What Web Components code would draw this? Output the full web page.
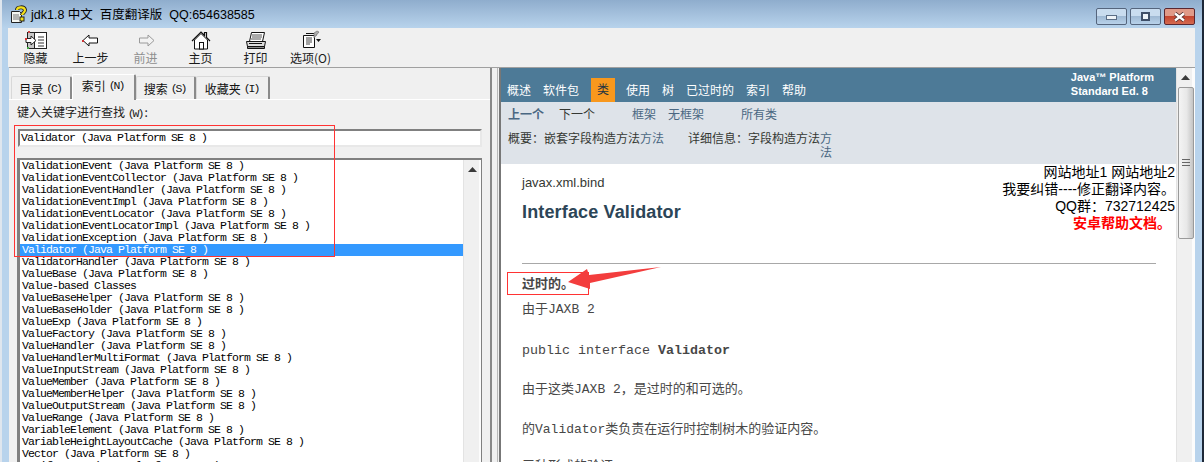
<!DOCTYPE html>
<html lang="zh">
<head>
<meta charset="utf-8">
<title>jdk1.8 中文 百度翻译版</title>
<style>
html, body { margin: 0; height: 100%; overflow: hidden; }
body { font: 12px "Noto Sans CJK SC", sans-serif; }
</style>
</head>
<body>
<help-window>
  <title-bar slot="title">jdk1.8 中文&nbsp; 百度翻译版&nbsp; QQ:654638585</title-bar>
  <tool-bar slot="tools">
    <tool-button label="隐藏" icon="hide"></tool-button>
    <tool-button label="上一步" icon="back"></tool-button>
    <tool-button label="前进" icon="forward" disabled></tool-button>
    <tool-button label="主页" icon="home"></tool-button>
    <tool-button label="打印" icon="print"></tool-button>
    <tool-button label="选项(O)" icon="options"></tool-button>
  </tool-bar>
  <index-pane slot="left"></index-pane>
  <doc-pane slot="right"></doc-pane>
</help-window>

<script>
const ICONS = {
  hide: `<svg width="22" height="20" viewBox="0 0 22 20"><rect x="2.500" y="2.500" width="19" height="16" fill="#fff" stroke="#222"/><rect x="2.500" y="2.500" width="7" height="16" fill="#c8c8c8" stroke="#222"/><path d="M13 7h6M13 10h6M13 13h6M13 16h6" stroke="#333"/><path d="M1 8.500h5V6l5 4.500L6 15v-2.500H1z" fill="#fff" stroke="#222"/><rect x="0" y="8" width="2" height="2" fill="#d33"/><rect x="3" y="1" width="2" height="2" fill="#c44"/><rect x="2" y="17" width="2" height="2" fill="#4a4"/></svg>`,
  back: `<svg width="22" height="20" viewBox="0 0 22 20"><path d="M3 10.500 9 5v3h8.500v5H9v3z" fill="#fff" stroke="#111"/><rect x="2" y="10" width="2" height="2" fill="#c33"/></svg>`,
  forward: `<svg width="22" height="20" viewBox="0 0 22 20"><path d="M19 10.500 13 5v3H4.500v5H13v3z" fill="#f2f2f2" stroke="#9a9a9a"/></svg>`,
  home: `<svg width="22" height="20" viewBox="0 0 22 20"><path d="M2 11 11 2l3.500 3.500V2.500h2v5L20 11" fill="none" stroke="#111" stroke-width="1.200"/><path d="M4.500 10v9h13v-9L11 3.500z" fill="#fff" stroke="#111"/><rect x="9.500" y="12.500" width="4" height="6.500" fill="#fff" stroke="#111"/></svg>`,
  print: `<svg width="22" height="20" viewBox="0 0 22 20"><path d="M6.500 2.500h13l-2 9h-13z" fill="#fff" stroke="#111"/><path d="M7 5h10M7 7h10M6 9h10" stroke="#555"/><path d="M1.500 11.500h19l-1 5h-17z" fill="#ddd" stroke="#111"/><path d="M2.500 16.500h17v2h-17z" fill="#888" stroke="#111"/><path d="M4 13.500h13" stroke="#111"/></svg>`,
  options: `<svg width="22" height="20" viewBox="0 0 22 20"><path d="M3.500 5.500h11v12h-11z" fill="#fff" stroke="#111"/><path d="M6 3.500h10v2" fill="none" stroke="#111"/><path d="M6 8h6M6 10h6M6 12h6M6 14h4" stroke="#444"/><path d="M14 3l3-2 2 1-5 6z" fill="#aaa" stroke="#666" stroke-width=".6"/><path d="M16 9h5l-2.500 3z" fill="#111"/></svg>`
}

class HelpWindow extends HTMLElement {
  constructor() {
    super()
    this.attachShadow({ mode: 'open' }).innerHTML = `
<style>
:host { display: flex; flex-direction: column; height: 462px; width: 1204px; box-sizing: border-box;
  padding: 0 2px 0 2px; position: relative; overflow: hidden;
  background: linear-gradient(#8fadcd 0, #b8d3ec 28px, #b8d3ec 100%); }
.frame { flex: 1; display: flex; flex-direction: column; min-height: 0; }
.client { flex: 1; display: flex; flex-direction: column; min-height: 0; margin: 0 7px; background: #f0f0f0; }
.panes { flex: 1; display: flex; min-height: 0; border-top: 1px solid #a0a0a0; }
.split { width: 11px; box-sizing: border-box; border-left: 2px solid #888; border-right: 2px solid #777;
  background: linear-gradient(90deg, #f0f0f0 0 5px, #b8b8b8 5px 6px, #f0f0f0 6px); }
svg.mark { position: absolute; left: 0; top: 0; pointer-events: none; }
::slotted([slot=left]) { width: 481px; }
::slotted([slot=right]) { flex: 1; min-width: 0; }
.edge { position: absolute; top: 0; bottom: 0; width: 2px; }
</style>
<div class="edge" style="left:0;background:#dfe6ee"></div>
<div class="edge" style="right:0;background:#1d2838"></div>
<div class="frame">
  <slot name="title"></slot>
  <div class="client">
    <slot name="tools"></slot>
    <div class="panes">
      <slot name="left"></slot>
      <div class="split"></div>
      <slot name="right"></slot>
    </div>
  </div>
</div>
<svg class="mark" width="1204" height="462">
  <rect x="14.500" y="125.500" width="320" height="131" fill="none" stroke="#f33"/>
  <rect x="507.500" y="272.500" width="81" height="22" fill="none" stroke="#f33"/>
  <path d="M568 282 587 269 589 275 661 267 590 283 590 289z" fill="#f33d3d"/>
</svg>`
  }
}

class TitleBar extends HTMLElement {
  constructor() {
    super()
    this.attachShadow({ mode: 'open' }).innerHTML = `
<style>
:host { display: flex; align-items: center; height: 28px; padding: 0 7px 0 7px; box-sizing: border-box;
  font: 12px/1 "Liberation Sans", "Noto Sans CJK SC", sans-serif; color: #000; }
svg { margin-right: 2px; margin-top: 2px; }
.text { flex: 1; font-size: 12.500px; padding-top: 3px; }
.btns { display: flex; gap: 3px; margin-top: 5px; }
.btn { width: 31px; height: 17px; box-sizing: border-box; border: 1px solid #55657d; border-radius: 2px;
  display: flex; align-items: center; justify-content: center;
  background: linear-gradient(#c9dcef 0 45%, #9fb9d4 50%, #b9d2ea 100%); }
.close { border-color: #5a2730; background: linear-gradient(#e09a88 0 45%, #c4452f 50%, #d56a50 100%); }
</style>
<svg width="20" height="20" viewBox="0 0 20 20">
  <path d="M2.500 6.500h8l2 2v9h-10z" fill="#f6f6f0" stroke="#222"/>
  <path d="M4 10h6M4 12h6M4 14h6" stroke="#777"/>
  <path d="M8 5c0-3 7-4 8 0 0 3-3 3-3 5" fill="none" stroke="#222" stroke-width="4"/>
  <path d="M8 5c0-3 7-4 8 0 0 3-3 3-3 5" fill="none" stroke="#f4e01a" stroke-width="2.200"/>
  <rect x="11" y="12" width="4" height="4" fill="#f4e01a" stroke="#222"/>
</svg>
<div class="text"><slot></slot></div>
<div class="btns">
  <div class="btn"><svg width="11" height="5" style="margin:2px 0 0"><rect x=".5" y=".5" width="10" height="4" fill="#eef3f8" stroke="#5b6d86"/></svg></div>
  <div class="btn"><svg width="11" height="9" style="margin:0"><rect x="2" y="1" width="7" height="7" fill="#eef3f8" stroke="#3f4f68" stroke-width="2"/></svg></div>
  <div class="btn close"><svg width="15" height="10" style="margin:0"><path d="M3 1.500 12 8.500M12 1.500 3 8.500" stroke="#4a2a2a" stroke-width="4"/><path d="M3 1.500 12 8.500M12 1.500 3 8.500" stroke="#fff" stroke-width="2.400"/></svg></div>
</div>`
  }
}

class ToolBar extends HTMLElement {
  constructor() {
    super()
    this.attachShadow({ mode: 'open' }).innerHTML = `
<style>
:host { display: flex; height: 39px; margin-left: -1px; padding-top: 2px; box-sizing: border-box; background: #f0f0f0; }
</style><slot></slot>`
  }
}

class ToolButton extends HTMLElement {
  connectedCallback() {
    const root = this.attachShadow({ mode: 'open' })
    root.innerHTML = `
<style>
:host { display: flex; flex-direction: column; align-items: center; width: 55px; }
svg { display: block; }
.label { font: 12px/14px "Noto Sans CJK SC", sans-serif; color: #1a1a1a; margin-top: 1px; white-space: nowrap; }
:host([disabled]) .label { color: #8f8f8f; }
</style>${ICONS[this.getAttribute('icon')]}<div class="label">${this.getAttribute('label')}</div>`
  }
}

class TabItem extends HTMLElement {
  connectedCallback() {
    const root = this.attachShadow({ mode: 'open' })
    root.innerHTML = `
<style>
:host { display: flex; align-items: center; justify-content: center; box-sizing: border-box; height: 23px; padding-top: 1px;
  align-self: flex-end; background: #f0f0f0; border: 1px solid #d8d8d8; border-bottom: 0; border-right: 2px solid #8a8a8a;
  border-radius: 2px 2px 0 0; font: 12px/1 "Noto Sans CJK SC", sans-serif; color: #111; white-space: nowrap; }
:host([active]) { height: 26px; border-color: #fff; border-right-color: #8a8a8a; padding: 0 0 3px; position: relative; top: 1px; background: #f0f0f0; }
.k { font: 11.500px/1 "Liberation Mono", monospace; letter-spacing: -2px; margin-left: 3px; padding-right: 2px; }
</style>${this.getAttribute('label')}<span class="k">${this.getAttribute('key')}</span>`
  }
}

const ROWS = ['ValidationEvent', 'ValidationEventCollector', 'ValidationEventHandler', 'ValidationEventImpl',
  'ValidationEventLocator', 'ValidationEventLocatorImpl', 'ValidationException', 'Validator', 'ValidatorHandler',
  'ValueBase', '*Value-based Classes', 'ValueBaseHelper', 'ValueBaseHolder', 'ValueExp', 'ValueFactory', 'ValueHandler',
  'ValueHandlerMultiFormat', 'ValueInputStream', 'ValueMember', 'ValueMemberHelper', 'ValueOutputStream', 'ValueRange',
  'VariableElement', 'VariableHeightLayoutCache', 'Vector', 'VerifyError']

class IndexPane extends HTMLElement {
  constructor() {
    super()
    const rows = ROWS.map(r => {
      const text = r[0] == '*' ? r.slice(1) : r + ' (Java Platform SE 8 )'
      return `<div class="row${r == 'Validator' ? ' sel' : ''}">${text}</div>`
    }).join('')
    this.attachShadow({ mode: 'open' }).innerHTML = `
<style>
:host { display: flex; flex-direction: column; min-height: 0; box-sizing: border-box; background: #f0f0f0; }
.tabs { display: flex; height: 32px; padding-left: 2px; box-sizing: border-box; border-bottom: 1px solid #fff; }
.tabs tab-item:nth-child(1) { width: 61px; }
.tabs tab-item:nth-child(2) { width: 64px; }
.tabs tab-item:nth-child(3) { width: 60px; }
.tabs tab-item:nth-child(4) { width: 74px; }
.body { flex: 1; min-height: 0; display: flex; flex-direction: column; padding: 4px 8px 0 8px; }
label { font: 12px/16px "Noto Sans CJK SC", sans-serif; color: #1a1a1a; }
label span { font: 11.500px "Liberation Mono", monospace; letter-spacing: -2px; padding-right: 2px; }
.input { height: 18px; margin: 9px 0 0 1px; box-sizing: border-box; background: #fff;
  border: 2px solid; border-color: #808080 #e8e8e8 #e8e8e8 #808080;
  font: 11.500px/14px "Liberation Mono", monospace; letter-spacing: -.9px; color: #000; padding-left: 1px; white-space: pre; }
.list { flex: 1; min-height: 0; margin-top: 11px; display: flex; box-sizing: border-box; background: #fff;
  border: solid #808080; border-width: 2px 1px 0 3px; }
.rows { flex: 1; min-width: 0; overflow: hidden; }
.row { height: 12px; font: 11.500px/12px "Liberation Mono", monospace; letter-spacing: -.9px; color: #000; padding-left: 2px; white-space: pre; }
.row.sel { background: #3399ff; color: #fff; }
</style>
<div class="tabs">
  <tab-item label="目录" key="(C)"></tab-item>
  <tab-item label="索引" key="(N)" active></tab-item>
  <tab-item label="搜索" key="(S)"></tab-item>
  <tab-item label="收藏夹" key="(I)"></tab-item>
</div>
<div class="body">
  <label>键入关键字进行查找 <span>(W)</span>:</label>
  <div class="input">Validator (Java Platform SE 8 )</div>
  <div class="list">
    <div class="rows">${rows}</div>
    <scroll-bar></scroll-bar>
  </div>
</div>`
  }
}

class ScrollBar extends HTMLElement {
  connectedCallback() {
    const root = this.attachShadow({ mode: 'open' })
    const thumb = this.getAttribute('thumb')
    root.innerHTML = `
<style>
:host { display: flex; flex-direction: column; width: 18px; flex: none; box-sizing: border-box;
  background: linear-gradient(90deg, #e3e3e3 0 1px, #f0f0f0 1px 16px, #fcfcfc 16px); }
.up { height: 19px; display: flex; align-items: center; justify-content: center; box-sizing: border-box; }
.thumb { box-sizing: border-box; margin: 0 1px 0 2px; border: 1px solid #9a9a9a; border-radius: 2px;
  background: linear-gradient(90deg, #f4f4f4, #e8e8e8 55%, #c4c4c4);
  display: flex; align-items: center; justify-content: center; }
</style>
<div class="up"><svg width="9" height="5"><path d="M0 5 4.500 0 9 5z" fill="#3a3a3a"/></svg></div>
${thumb ? `<div class="thumb" style="height:${thumb}px"><svg width="8" height="8"><path d="M0 .5h8M0 3.500h8M0 6.500h8" stroke="#666"/></svg></div>` : ''}`
  }
}

class DocNav extends HTMLElement {
  constructor() {
    super()
    this.attachShadow({ mode: 'open' }).innerHTML = `
<style>
:host { display: block; font: 12px/1 "Noto Sans CJK SC", sans-serif; }
.top { height: 34px; box-sizing: border-box; padding: 11px 41px 0 6px; background: #4d7a97; color: #fff; display: flex; align-items: flex-end; }
.top span { margin-right: 12px; height: 23px; line-height: 22px; }
.top .on { background: #f8981d; color: #253441; padding: 0 6px; height: 24px; margin-right: 11px; }
.brand { margin-left: auto; align-self: flex-start; margin-top: -9px; font: bold 11px/14px "Liberation Sans", sans-serif; white-space: nowrap; }
.sub { height: 62px; box-sizing: border-box; background: #dee3e9; padding: 0 0 0 7px; color: #353833; line-height: 14px; }
.line { display: flex; }
a { color: #4a6782; text-decoration: none; }
.line.a { height: 24px; align-items: center; }
.line.a > * { flex: none; }
.line.b { margin-top: 5px; }
.nar { width: 12px; word-break: break-all; }
</style>
<div class="top">
  <span>概述</span><span>软件包</span><span class="on">类</span><span>使用</span><span>树</span><span>已过时的</span><span>索引</span><span>帮助</span>
  <div class="brand">Java™ Platform<br>Standard Ed. 8</div>
</div>
<div class="sub">
  <div class="line a">
    <a style="font-weight:700;width:51px">上一个</a><span style="width:73px">下一个</span>
    <a style="width:36px">框架</a><a style="width:73px">无框架</a><a>所有类</a>
  </div>
  <div class="line b">
    <span>概要：嵌套字段构造方法</span><a>方法</a>
    <span style="margin-left:24px">详细信息：字段构造方法</span><a class="nar">方法</a>
  </div>
</div>`
  }
}

class DocPane extends HTMLElement {
  constructor() {
    super()
    this.attachShadow({ mode: 'open' }).innerHTML = `
<style>
:host { display: flex; flex-direction: column; min-height: 0; background: #fff; overflow: hidden; position: relative; }
.main { flex: 1; display: flex; min-height: 0; padding-right: 19px; }
.col { flex: 1; min-width: 0; display: flex; flex-direction: column; overflow: hidden; }
.content { flex: 1; overflow: hidden; padding: 0 20px 0 21px; color: #474747;
  font: 13px/16px "Liberation Mono", "Noto Sans CJK SC", monospace; }
.links { float: right; margin-right: -19px; text-align: right; color: #000;
  font: 14px/17px "Liberation Sans", "Noto Sans CJK SC", sans-serif; white-space: nowrap; }
.links b { color: #f00; }
.pkg { font: 13px/16px "Liberation Sans", sans-serif; color: #353833; padding-top: 11px; }
h2 { margin: 11px 0 0; font: bold 18px/20px "Liberation Sans", sans-serif; letter-spacing: .15px; color: #2c4557; }
hr { clear: both; border: 0; height: 1px; background: #a8a8a8; margin: 41px 0 0; }
.dep { margin-top: 13px; font-weight: 700; }
.p { margin-top: 9px; }
.sig { margin-top: 25px; font-size: 13.330px; }
.g { margin-top: 23px; }
.g2 { margin-top: 24px; }
.g3 { margin-top: 21px; }
</style>
<doc-nav></doc-nav>
<div class="main">
  <div class="col">
    <div class="content">
      <div class="links">网站地址1 网站地址2<br>我要纠错----修正翻译内容。<br>QQ群：732712425<br><b>安卓帮助文档。&nbsp;</b></div>
      <div class="pkg">javax.xml.bind</div>
      <h2>Interface Validator</h2>
      <hr>
      <div class="dep">过时的。</div>
      <div class="p">由于JAXB 2</div>
      <div class="sig">public interface <b>Validator</b></div>
      <div class="g">由于这类JAXB 2，是过时的和可选的。</div>
      <div class="g2">的Validator类负责在运行时控制树木的验证内容。</div>
      <div class="g3">三种形式的验证</div>
    </div>
  </div>
</div>
<scroll-bar thumb="152" style="position:absolute;right:0;top:0;bottom:0;width:19px"></scroll-bar>`
  }
}

customElements.define('help-window', HelpWindow)
customElements.define('title-bar', TitleBar)
customElements.define('tool-bar', ToolBar)
customElements.define('tool-button', ToolButton)
customElements.define('tab-item', TabItem)
customElements.define('index-pane', IndexPane)
customElements.define('scroll-bar', ScrollBar)
customElements.define('doc-nav', DocNav)
customElements.define('doc-pane', DocPane)
</script>
</body>
</html>
